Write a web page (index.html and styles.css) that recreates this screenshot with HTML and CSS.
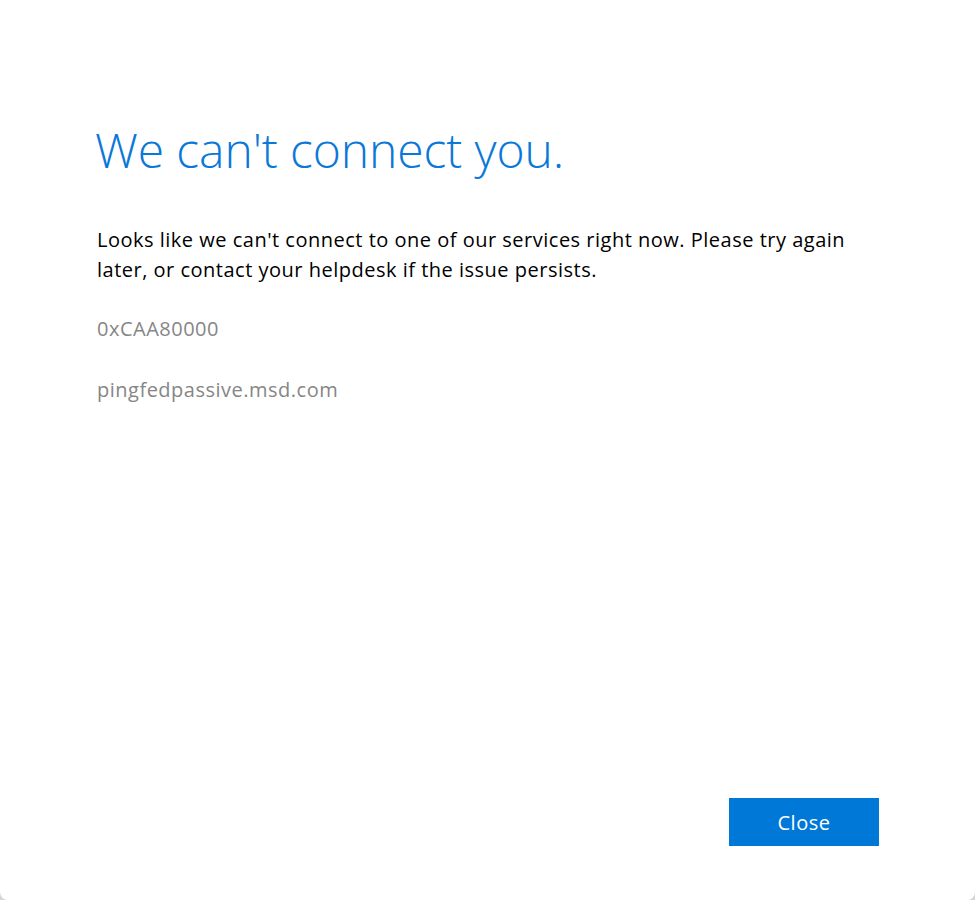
FILE: index.html
```html
<!DOCTYPE html>
<html lang="en">
<head>
<meta charset="utf-8">
<title>We can't connect you.</title>
<link rel="stylesheet" href="styles.css">
</head>
<body>
<div class="window">
  <main class="content">
    <h1 class="title">We can't connect you.</h1>
    <p class="message">Looks like we can't connect to one of our services right now. Please try again later, or contact your helpdesk if the issue persists.</p>
    <p class="detail code">0xCAA80000</p>
    <p class="detail host">pingfedpassive.msd.com</p>
  </main>
  <footer class="actions">
    <button class="btn-primary" type="button">Close</button>
  </footer>
</div>
</body>
</html>
```
FILE: styles.css
```css
html, body {
  margin: 0;
  padding: 0;
  background: #d6d6d6;
}
.window {
  box-sizing: border-box;
  width: 975px;
  height: 900px;
  background: #ffffff;
  border-radius: 0 0 8px 8px;
  display: flex;
  flex-direction: column;
  padding: 0 96px 54px 97px;
  font-family: "Open Sans", "Noto Sans", sans-serif;
}
.content {
  flex: 1;
  display: flex;
  flex-direction: column;
}
.title {
  margin: 120px 0 0 -2px;
  font-size: 48px;
  font-weight: 300;
  line-height: 60px;
  color: #0a78d8;
  letter-spacing: -0.1px;
}
.message {
  margin: 45px 0 0;
  font-size: 20px;
  line-height: 30px;
  letter-spacing: 0.5px;
  color: #000;
}
.detail {
  margin: 0;
  font-size: 20px;
  line-height: 30px;
  letter-spacing: 0.5px;
  color: #868686;
}
.code { margin-top: 29px; }
.host { margin-top: 31px; }
.actions {
  display: flex;
  justify-content: flex-end;
}
.btn-primary {
  width: 150px;
  height: 48px;
  border: none;
  background: #0078d7;
  color: #fff;
  font-family: "Open Sans", "Noto Sans", sans-serif;
  font-size: 20px;
  letter-spacing: 0.5px;
  padding: 0;
}
```
